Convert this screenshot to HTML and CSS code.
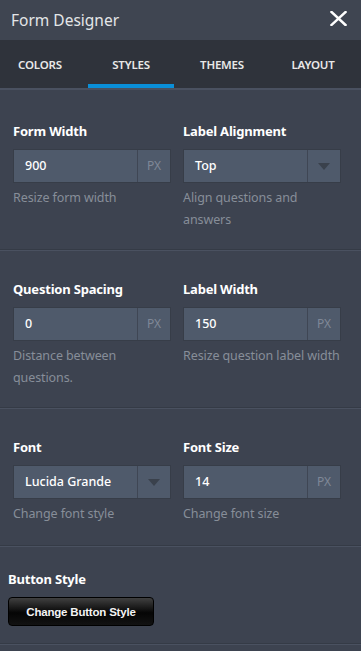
FILE: index.html
```html
<!DOCTYPE html>
<html lang="en">
<head>
    <meta charset="UTF-8">
    <meta name="viewport" content="width=device-width, initial-scale=1.0">
    <title>Form Designer</title>
    <link rel="stylesheet" href="styles.css">
</head>
<body>
    <div class="header">
        <span class="title">Form Designer</span>
        <svg class="close" width="17" height="15" viewBox="0 0 17 15">
            <path d="M1.5 1 L15.5 14 M15.5 1 L1.5 14" stroke="#ffffff" stroke-width="2.4" stroke-linecap="square"/>
        </svg>
    </div>

    <div class="tabs">
        <div class="tab">COLORS</div>
        <div class="tab active">STYLES</div>
        <div class="tab">THEMES</div>
        <div class="tab">LAYOUT</div>
    </div>

    <div class="section first">
        <div class="field">
            <div class="label">Form Width</div>
            <div class="input">
                <span class="value">900</span>
                <span class="unit">PX</span>
            </div>
            <div class="help">Resize form width</div>
        </div>
        <div class="field">
            <div class="label">Label Alignment</div>
            <div class="input">
                <span class="value">Top</span>
                <span class="unit arrow"><span class="caret"></span></span>
            </div>
            <div class="help">Align questions and answers</div>
        </div>
    </div>

    <div class="section">
        <div class="field">
            <div class="label">Question Spacing</div>
            <div class="input">
                <span class="value">0</span>
                <span class="unit">PX</span>
            </div>
            <div class="help">Distance between questions.</div>
        </div>
        <div class="field">
            <div class="label">Label Width</div>
            <div class="input">
                <span class="value">150</span>
                <span class="unit">PX</span>
            </div>
            <div class="help">Resize question label width</div>
        </div>
    </div>

    <div class="section last">
        <div class="field">
            <div class="label">Font</div>
            <div class="input">
                <span class="value">Lucida Grande</span>
                <span class="unit arrow"><span class="caret"></span></span>
            </div>
            <div class="help">Change font style</div>
        </div>
        <div class="field">
            <div class="label">Font Size</div>
            <div class="input">
                <span class="value">14</span>
                <span class="unit">PX</span>
            </div>
            <div class="help">Change font size</div>
        </div>
    </div>

    <div class="section buttons">
        <div class="label">Button Style</div>
        <button class="change">Change Button Style</button>
    </div>
</body>
</html>
```

FILE: styles.css
```css
body {
    margin: 0;
    background-color: #3d4350;
    font-family: "Noto Sans", "Open Sans", sans-serif;
    color: #ffffff;
}
.header {
    display: flex;
    justify-content: space-between;
    align-items: center;
    height: 40px;
    padding: 0 14px 0 11px;
    background-color: #3f4551;
}
.title {
    font-size: 15.5px;
    color: #e4e6e8;
}
.close {
    display: block;
    margin-top: -4px;
}
.tabs {
    display: flex;
    gap: 5px;
    height: 50px;
    background-color: #2f333b;
    border-bottom: 2px solid #4a5160;
    box-sizing: border-box;
}
.tab {
    width: 86px;
    box-sizing: border-box;
    padding-top: 17px;
    text-align: center;
    font-size: 11.5px;
    font-weight: 600;
    color: #e8e8e8;
    letter-spacing: -0.2px;
}
.tab:first-child {
    margin-left: -3px;
}
.tab.active {
    border-bottom: 4px solid #0a8fd8;
}
.section {
    display: grid;
    grid-template-columns: 158px 158px;
    column-gap: 12px;
    padding: 28px 14px 18px 13px;
    border-bottom: 1px solid #353b46;
    box-shadow: 0 1px 0 #4a5160;
    margin-bottom: 1px;
}
.section.first {
    padding-top: 31px;
}
.section.last {
    padding-bottom: 20px;
}
.label {
    font-size: 13px;
    font-weight: 700;
    line-height: 20px;
    margin-bottom: 8px;
    letter-spacing: -0.2px;
}
.input {
    display: flex;
    height: 34px;
    background-color: #4f5a6b;
    border: 1px solid #373d48;
    box-sizing: border-box;
}
.value {
    flex: 1;
    padding-left: 11px;
    font-size: 12.5px;
    font-weight: 500;
    line-height: 32px;
    color: #ffffff;
    border-right: 1px solid #3f4654;
}
.unit {
    width: 32px;
    text-align: center;
    font-size: 12px;
    line-height: 32px;
    color: #7f8897;
}
.arrow {
    display: flex;
    justify-content: center;
    align-items: center;
}
.caret {
    width: 0;
    height: 0;
    border-left: 6px solid transparent;
    border-right: 6px solid transparent;
    border-top: 7px solid #3a414c;
}
.help {
    margin-top: 4px;
    font-size: 12.5px;
    line-height: 22px;
    color: #878e99;
    letter-spacing: -0.1px;
}
.section.buttons {
    display: block;
    padding: 22px 8px 17px 8px;
}
.buttons .label {
    margin-bottom: 8px;
}
.change {
    display: block;
    width: 146px;
    height: 29px;
    padding: 0;
    border: 1px solid #000000;
    border-radius: 4px;
    background: linear-gradient(#404040, #050505 55%, #121212);
    color: #f4f4f4;
    font-family: "Liberation Sans", sans-serif;
    font-size: 11.5px;
    font-weight: 700;
    letter-spacing: -0.2px;
    cursor: pointer;
}
```
